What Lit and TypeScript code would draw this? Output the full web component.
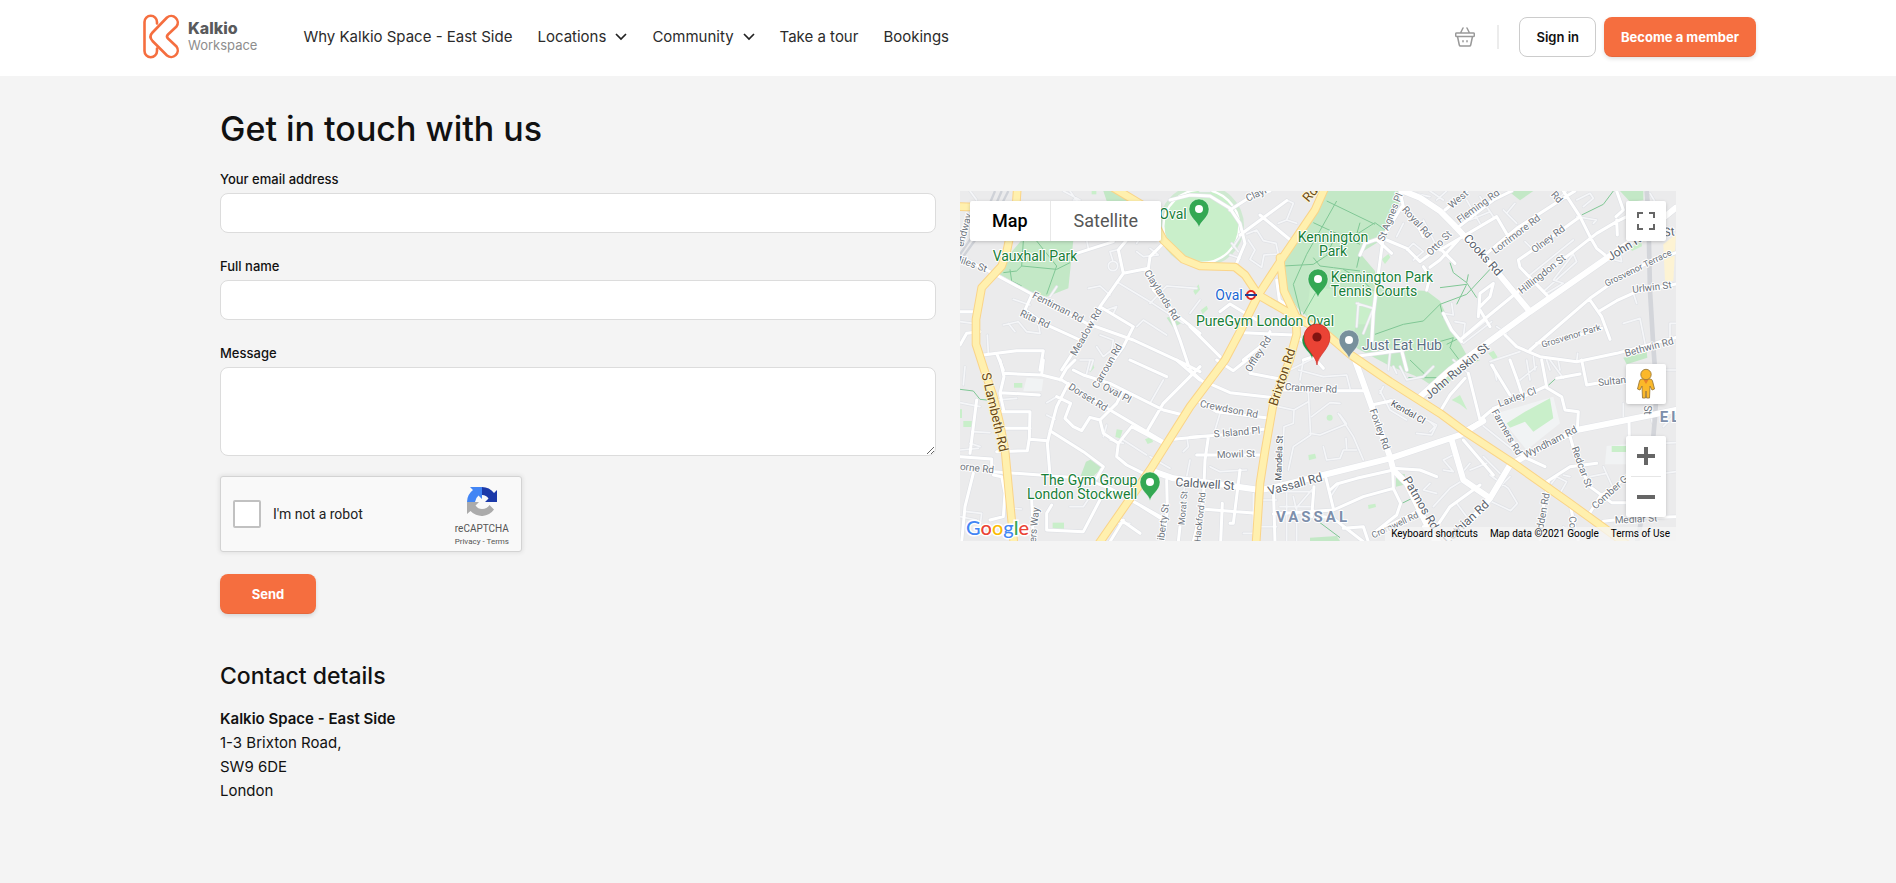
import { LitElement, html, svg, css } from "lit";
import { customElement } from "lit/decorators.js";

interface Sector {
  x: number;
  y: number;
  streets: string;
  lanes: string;
}

interface Label {
  t: string;
  x: number;
  y: number;
  r?: number;
  k?: string;
}

/* Base geometry is stored at three times the display scale. */
const PARKS = [
  "M105 242L185 147 340 147 325 292 260 317 210 302Z",
  "M1090 0L1330 0 1280 137 1200 187 1245 240 1250 290 1400 300 1440 330 1480 420 1530 510 1440 600 1380 560 1290 525 1150 450 1040 375 1012 350 975 300 970 217 1065 57Z",
  "M1340 507L1560 507 1470 550 1420 572 1370 560Z",
  "M1645 0L1720 0 1680 28Z", "M1980 0L2050 0 2050 28 2010 32Z",
  "M1990 500L2060 482 2062 500 2000 520Z",
  "M430 0L500 0 530 35 440 30Z", "M620 380L650 370 665 395 640 410Z",
  "M360 860L378 812 400 802 428 830 390 865Z",
  "M1308 845L1335 850 1330 882 1308 887Z", "M1050 1040L1130 1035 1140 1050 1050 1050Z",
];
const LAWNS = [
  "M1050 290L1240 300 1240 400 1190 400 1165 470 1040 410 1040 370Z",
  "M1640 697L1695 662 1770 622 1780 682 1720 722 1695 692 1650 710Z",
  "M1475 627L1500 612 1522 657 1500 640Z", "M1955 765h55v18h-55Z",
  "M162 576h25v14h-25Z", "M10 690h26v18h-26Z", "M0 655h6v26h-6Z", "M470 715l18 3-8 24-14-4Z",
  "M555 745l20-8 4 16-16 6Z", "M278 995h34v20h-34Z", "M385 530l14-12 4 12-12 14Z",
  "M700 300l16-20 4 16-14 16Z", "M722 358l18-14 4 10-16 16Z", "M1265 205l20-16 6 10-16 20Z",
  "M1045 792l20-4 4 14-22 6Z", "M1224 942l22-4 2 10-22 6Z", "M1100 680a9 9 0 1 0 18 0a9 9 0 1 0-18 0",
  "M2010 170l34-18 2 14-30 14Z", "M1585 487l16-8 12 20-12 8Z", "M395 0l14 0 0 10-14 0Z",
];
const PATHS =
  "M130 245L170 240 185 225 290 235 330 215M150 235L155 270 185 285M230 150L290 225M290 225L260 310M190 150L185 225" +
  "M585 180L605 160M1100 30L1245 100M1060 95L1200 160M1200 95L1190 130 1245 95 1280 120M1130 130L1100 190M1130 30L1040 190 1000 280 1030 400" +
  "M1060 200L1080 225 1120 230 1200 240M970 225L1060 220 1150 160M1150 235L1210 270 1240 300M1200 187L1190 230" +
  "M1030 370L1070 300M1245 430L1330 400 1390 390 1440 340 1520 310 1590 235M1470 215L1480 245 1520 275 1550 320M1520 275L1525 250M1440 290L1520 280 1490 340" +
  "M1440 340L1450 380M1410 460L1480 440 1470 470 1500 510M1460 460L1500 440M1865 72L1930 40 1960 0" +
  "M0 595L40 600 60 625 110 630M1345 560L1440 560M1350 507L1400 555M1380 612L1430 560M1755 592L1790 560M1080 995L1140 1040M1320 940L1360 920";

const SECTORS: Sector[] = [
  {
    x: -30, y: -33,
    streets:
      "M30 230L130 280 250 345 410 430 550 480 690 545 750 575M335 570L400 470 450 380 520 280 595 265 600 230 640 190" +
      "M520 280L505 210 530 180M595 265L610 330 680 405 750 460M660 400L690 480 720 570M380 220L490 185M450 380L550 440 520 500 470 570" +
      "M245 345L225 390 280 430 390 480M100 525L140 520 200 512 280 512 270 570M30 495L50 460 90 455M140 520L160 570M30 395L75 395",
    lanes:
      "M500 305L600 365 700 430M160 435L205 425 230 455 270 460 265 430M175 430L195 455M190 358L240 375M415 325L450 318 480 345M440 500L460 530 485 510 490 480 450 465" +
      "M360 33L385 70M600 370L650 318 740 325M560 215L580 230 625 225 600 205M115 520L112 465M560 440L580 420 650 465M320 320L300 350M340 33L390 60 370 60" +
      "M475 258a14 14 0 1 0 28 0a14 14 0 1 0-28 0M488 240L480 215 500 210M30 425L70 430M60 33L80 60M600 130L560 190M410 180L415 205M720 400L750 360M390 540L430 540 420 570M470 390L500 380 490 400",
  },
  {
    x: 690, y: -33,
    streets:
      "M-60 60L0 45 60 48 120 85 150 130 165 190 140 250M120 90L190 45 240 33M150 165L290 62M210 105L305 183M630 33L640 80 690 150 700 170" +
      "M635 80L580 170 565 280 550 400 545 490M510 225L525 190 560 178 605 220M590 180L650 205 690 245 750 200M700 260L720 290 710 330" +
      "M160 458L310 465 350 490M90 395L120 372 200 420M260 300L268 360 320 400M0 440L90 530M490 530L640 510M160 540L230 485 240 455M635 512L650 570M340 540L370 530 400 565",
    lanes:
      "M170 162L200 150 220 182 258 190 265 222 222 225 215 262 180 238 195 210 175 180M265 130L290 120 320 130M290 120L310 70 290 60M640 130L620 170M650 210L670 190 700 215M670 240L700 215" +
      "M500 370L550 385 520 460M505 370L500 440M130 200L150 170M125 190L145 215M120 225L150 235M60 33L30 33M600 520L595 570M700 120L740 200M720 50L640 33M380 530L300 570",
  },
  {
    x: 1410, y: -33,
    streets:
      "M45 90L80 60 110 33M80 145L190 60 245 33M30 210L200 110 235 170M170 220L260 145 400 55 435 33M400 33L450 110 480 170 500 205 525 225M450 110L395 150 265 240 270 262 355 350" +
      "M90 480L160 420 270 330 340 280 430 215 500 160 560 125 590 110M300 510L480 355 600 270 738 218M505 395L560 362 620 335 738 312M480 360L515 410 540 478M320 490L400 480 515 445" +
      "M225 465L260 500 330 530 440 545 560 520 738 472M0 262L30 240 85 180M30 205L75 250M40 400L65 450 95 485M145 410L150 340 190 310 180 350 150 380M150 390L180 440M560 33L580 90 558 110M560 120L562 165",
    lanes:
      "M310 530L315 570M350 540L360 570M440 545L443 520M385 545L390 570M580 430L630 415 645 490M340 335L440 245 430 222 370 300 400 310 350 340M110 60L150 130M150 50L190 110M100 490L185 425M100 475L170 420" +
      "M230 100L255 70M440 110L500 120 490 130M440 60L480 40 490 55 460 80M285 185L310 210M300 285L430 180M200 440L230 460M380 60L410 33M640 120L600 130M180 545L270 515M40 400L70 405 65 370M75 425L105 430 100 470" +
      "M0 33L40 60M20 60L50 33M610 340L620 370M720 470L720 430 738 430M555 240L575 245 570 220M120 120L180 95M220 90L260 130M660 40L690 90",
  },
  {
    x: -30, y: 507,
    streets:
      "M160 40L275 45 335 60 480 150 640 245M150 0L162 50 150 100 162 155M275 45L280 0M330 60L350 25 375 0M370 30L400 45 480 70 640 150 700 165M355 70L320 140 300 215 292 250 300 345" +
      "M150 98L268 105M150 155L240 155 238 235 232 272 140 275M150 205L240 205M240 238L292 242M300 212L400 275 460 320 440 355M130 335L270 345 400 355 480 385 560 430 640 480M455 410L400 515 290 510 290 460 305 435" +
      "M750 20L720 50 640 130 590 215M540 0L650 50M680 0L720 35 750 60M450 180L420 172 395 212 370 200 345 175 362 130 320 110M450 180L500 130 520 90M450 180L460 220 505 250 545 200M505 250L500 290 530 315 600 350M545 200L640 250" +
      "M670 238L750 230M520 480L480 545M510 478L570 520M650 360L652 450 640 545M560 430L640 475M690 500L685 545M30 290L125 297 125 330M130 345L155 350 165 400 160 470 120 480M80 120L60 280M70 340L45 440 35 545M250 545L245 415",
    lanes:
      "M410 40L420 0M65 215L120 218M30 128L90 140M50 455L95 460 90 500M30 470L80 480M190 445L215 447M520 240L590 285M290 128L320 110M290 165L315 178M470 195L460 230M140 120L200 115M480 240L520 250M600 290L660 325" +
      "M700 275L715 260 712 240M40 75L45 20M30 270L85 265M360 440L400 440 420 410M60 250L90 260M500 490L540 490M700 400L720 300M60 520L120 520M640 60L600 130",
  },
  {
    x: 690, y: 507,
    streets:
      "M0 30L50 75M45 65L120 98 240 112M80 0L130 32 170 0M180 40L285 60M280 90L400 92 525 92M20 120L80 155 240 175M0 232L90 225 220 208M50 285L210 285M55 232L45 300 40 420 10 545M20 285L50 285M92 545L97 430M45 448L200 460" +
      "M545 135L605 122M120 490L130 490M130 490L150 330M420 390L440 372 500 355 600 332M372 380L365 470M408 355L430 445M250 462L430 450 520 410 610 385 608 330M610 325L690 330 740 350M610 385L632 430 620 465 550 520M550 520L690 450" +
      "M400 470L430 475 520 545M460 505L520 500 535 545M700 500L750 545M250 380L255 545",
    lanes:
      "M90 160L75 210M60 320L90 335 170 330M330 70L355 100 362 225 310 260 295 330M330 60L340 0M325 30L400 50 470 45 480 85M265 140L312 150 310 190 282 200 272 380M355 125L312 150M365 170L420 128 450 130M360 220L390 225 470 192 450 165" +
      "M445 160L490 230 520 300M400 260L410 300 450 295 460 270 500 270M468 235L470 265M570 92L600 150 650 180M600 120L680 165 740 195 725 225 680 220M630 20L650 60 700 50 730 20M310 410L318 445 365 390M270 395L365 395M425 405L445 375M720 370L700 390 740 400" +
      "M270 440L360 440M290 400L290 545M320 445L320 545M190 400L190 545M160 520L200 520M210 420L260 420M210 500L260 500M580 80L570 100M610 20L620 40",
  },
  {
    x: 1410, y: 507,
    streets:
      "M115 40L150 180 185 150M190 145L270 115 345 80M345 80L395 110 405 150 445 155 442 208M185 15L240 105M240 0L262 60 275 100M335 0L350 80M380 55L450 42M455 0L470 75 500 70 600 60M190 145L200 175 280 290 345 320" +
      "M350 365L420 320 500 310M420 228L440 300 480 380 545 428 590 428M480 458L510 410 600 345M355 365L340 440 330 545M420 430L430 480 445 545M520 484L600 475 738 470M597 180L598 240M20 500L60 440 150 375M190 345L100 240" +
      "M30 155L60 105 105 55M105 210L150 185",
    lanes:
      "M180 345L235 385 262 430 242 452 185 425M100 360L60 385 10 440M120 310L95 340M40 330L70 335 40 300 80 280M160 290L210 340M520 320L545 375M150 190L250 270M660 160L668 190M690 250L738 248M700 340L738 335M0 215L15 200 0 185M200 60L190 15" +
      "M70 0L115 40M80 430L110 470M400 345L420 350M365 370L380 350 410 365 390 400M400 500L420 520 430 480M480 350L530 340M640 30L738 30M700 200L738 160M580 130L580 180M120 330L170 310M270 60L320 20M290 0L300 60M360 0L400 55M240 350L210 380",
  },
];

const ARTERIES =
  "M1330 0L1380 20 1440 60 1480 100 1590 217 1710 362M2148 50L2080 105 1940 202 1710 362 1580 457 1470 537 1380 617M570 837L640 862 780 880 900 897 930 892 1090 852 1290 802 1440 752 1500 732 1570 690" +
  "M2148 657L2000 687 1850 717 1710 787 1650 822 1590 922 1540 980 1440 1070M1475 747L1510 867 1590 922M1185 507L1240 660 1290 797 1300 837 1340 877 1380 960 1430 1060";
const TRUNKS =
  "M172 -10L168 50 140 182 125 225 65 290 48 385 48 460 72 535 100 617 120 700 135 777 150 937 162 1060M0 47L168 52M460 -10L560 50 610 147 670 205 720 225 825 228 855 252 895 312 990 367 1100 430 1170 490 1290 572 1440 667 1515 722 1660 817 1830 937 2000 1060" +
  "M1095 -10L1065 57 970 197 895 312 840 422 795 507 690 647 570 837 415 1060M960 200L972 300 1008 377 1010 430 988 510 940 637 915 780 900 877 888 1060";
const RAIL = "M2060 0L2065 60 2070 300 2080 467 2090 600 2085 680 2070 850 2030 1060";
const YARD = "M105 0L80 60 55 110 0 190M125 0L95 70 65 120 0 210M145 0L110 70";

const LABELS: Label[] = [
  { t: "Vauxhall Park", x: 75, y: 65, k: "poi" }, { t: "Oval", x: 213, y: 23, k: "poi" },
  { t: "Kennington", x: 373, y: 46, k: "poi" }, { t: "Park", x: 373, y: 60, k: "poi" },
  { t: "Kennington Park", x: 422, y: 86, k: "poi" }, { t: "Tennis Courts", x: 414, y: 100, k: "poi" },
  { t: "Oval", x: 269, y: 104, k: "poi tube" }, { t: "PureGym London Oval", x: 305, y: 130, k: "poi" },
  { t: "Just Eat Hub", x: 442, y: 154, k: "poi work" }, { t: "The Gym Group", x: 129, y: 289, k: "poi" },
  { t: "London Stockwell", x: 122, y: 303, k: "poi" },
  { t: "S Lambeth Rd", x: 35, y: 221, r: 77, k: "trunk" }, { t: "Brixton Rd", x: 322, y: 186, r: -72, k: "trunk" },
  { t: "Rd", x: 350, y: 3, r: -50, k: "trunk" },
  { t: "Cooks Rd", x: 523, y: 64, r: 48, k: "main" }, { t: "John Ruskin St", x: 497, y: 180, r: -40, k: "main" },
  { t: "John R", x: 664, y: 57, r: -32, k: "main" }, { t: "St", x: 709, y: 41, r: -5, k: "main" },
  { t: "Caldwell St", x: 245, y: 293, r: 4, k: "main" }, { t: "Vassall Rd", x: 335, y: 293, r: -15, k: "main" },
  { t: "Patmos Rd", x: 461, y: 312, r: 60, k: "main" }, { t: "Lothian Rd", x: 506, y: 331, r: -43, k: "main" },
  { t: "Wyndham Rd", x: 590, y: 251, r: -27 }, { t: "Bethwin Rd", x: 689, y: 156, r: -15 },
  { t: "Miles St", x: 10, y: 72, r: 20 }, { t: "endway", x: 4, y: 39, r: -75 },
  { t: "Fentiman Rd", x: 98, y: 116, r: 27 }, { t: "Rita Rd", x: 75, y: 128, r: 24 },
  { t: "Meadow Rd", x: 126, y: 141, r: -60 }, { t: "Claylands Rd", x: 202, y: 104, r: 58 },
  { t: "Carroun Rd", x: 147, y: 175, r: -60 }, { t: "Dorset Rd", x: 128, y: 206, r: 32 },
  { t: "Oval Pl", x: 157, y: 202, r: 28 }, { t: "orne Rd", x: 17, y: 277, r: 6 }, { t: "ers Way", x: 74, y: 334, r: -84 },
  { t: "Clayl", x: 296, y: 3, r: -25 }, { t: "Offley Rd", x: 298, y: 163, r: -58 },
  { t: "St Agnes Pl", x: 430, y: 26, r: -68 }, { t: "Royal Rd", x: 457, y: 31, r: 48 },
  { t: "Otto St", x: 479, y: 52, r: -45 }, { t: "West", x: 498, y: 8, r: -40 }, { t: "Fleming Rd", x: 518, y: 15, r: -36 },
  { t: "Rd", x: 597, y: 6, r: 48 }, { t: "Lorrimore Rd", x: 556, y: 43, r: -37 }, { t: "Olney Rd", x: 588, y: 48, r: -37 },
  { t: "Hillingdon St", x: 582, y: 83, r: -38 }, { t: "Grosvenor Terrace", x: 678, y: 77, r: -26, k: "small" },
  { t: "Urlwin St", x: 692, y: 96, r: -7 }, { t: "Grosvenor Park", x: 611, y: 145, r: -17, k: "small" },
  { t: "Morat St", x: 223, y: 317, r: -85, k: "small" }, { t: "iberty St", x: 203, y: 331, r: -82 },
  { t: "Hackford Rd", x: 240, y: 326, r: -84, k: "small" }, { t: "Cranmer Rd", x: 351, y: 197, r: 3 },
  { t: "Crewdson Rd", x: 269, y: 218, r: 11 }, { t: "S Island Pl", x: 277, y: 241, r: -5 },
  { t: "Mowil St", x: 276, y: 263, r: -2 }, { t: "Mandela St", x: 319, y: 267, r: -88, k: "small dark" },
  { t: "Foxley Rd", x: 420, y: 238, r: 70 }, { t: "Kendal Cl", x: 448, y: 221, r: 30, k: "small dark" },
  { t: "Cromwell Rd", x: 435, y: 334, r: -25, k: "small" }, { t: "Laxley Cl", x: 557, y: 206, r: -20 },
  { t: "Farmers Rd", x: 547, y: 241, r: 60 }, { t: "Redcar St", x: 622, y: 276, r: 70 },
  { t: "Comber Gr", x: 651, y: 300, r: -42 }, { t: "Medlar St", x: 676, y: 328, r: -3 },
  { t: "Sultan", x: 652, y: 190, r: -6 }, { t: "St", x: 687, y: 219, r: 90 },
  { t: "dden Rd", x: 583, y: 320, r: -80 }, { t: "Cou", x: 613, y: 334, r: 86 },
  { t: "VASSAL", x: 353, y: 326, k: "area" }, { t: "EL", x: 711, y: 226, k: "area" },
];

const PIN = "M0 0C-1-7-10-10-10-19A10 10 0 1 1 10-19C10-10 1-7 0 0Z";

@customElement("street-map")
export class StreetMap extends LitElement {
  static styles = css`
    :host { display: block; position: relative; height: 350px; overflow: hidden; background: #ebebec; font-family: Roboto, sans-serif; }
    svg.base { display: block; width: 100%; height: 100%; }
    .case, .fill { fill: none; stroke-linejoin: round; stroke-linecap: round; }
    .lane.case { stroke: #e0e2e6; stroke-width: 9; }
    .lane.fill { stroke: #f5f6f8; stroke-width: 5; }
    .street.case { stroke: #e0e2e6; stroke-width: 13; }
    .street.fill { stroke: #fff; stroke-width: 9; }
    .artery.case { stroke: #e0e2e6; stroke-width: 21; }
    .artery.fill { stroke: #fff; stroke-width: 18; }
    .trunk-road.case { stroke: #fad488; stroke-width: 26; }
    .trunk-road.fill { stroke: #fff0ae; stroke-width: 20; }
    .park { fill: #c3e8c6; }
    .lawn { fill: #c9efca; }
    .zone { fill: #f1f3f4; }
    .retail { fill: #fdf3d3; }
    .path { fill: none; stroke: #7fc795; stroke-width: 3; }
    .rail { fill: none; stroke: #d3d5da; stroke-width: 14; }
    .yard { fill: none; stroke: #cfd2d8; stroke-width: 7; }
    text { font-size: 10px; fill: #6f7680; stroke: #fff; stroke-width: 2px; paint-order: stroke; stroke-linejoin: round; text-anchor: middle; dominant-baseline: central; }
    .small { font-size: 9px; }
    .dark { fill: #4c535c; }
    .main { font-size: 12px; fill: #59616b; }
    .trunk { font-size: 13px; fill: #6a4a16; stroke: #fff6d2; }
    .poi { font-size: 14px; fill: #188038; }
    .tube { fill: #1a66d2; }
    .work { fill: #5b7083; }
    .area { font-size: 15px; font-weight: 700; fill: #7d8fab; letter-spacing: 3px; }
    .ctl { position: absolute; display: flex; background: #fff; box-shadow: 0 1px 4px -1px rgba(0, 0, 0, 0.3); border-radius: 2px; }
    button { margin: 0; padding: 0; border: 0; background: none; font: 18px/40px Roboto, sans-serif; color: #565656; height: 40px; cursor: pointer; }
    .types { left: 10px; top: 10px; }
    .types button { padding: 0 23px; }
    .types .on { padding: 0 22px; color: #000; font-weight: 500; border-right: 1px solid #e8e8e8; }
    .square button { width: 40px; display: grid; place-items: center; }
    .full { right: 10px; top: 10px; }
    .man { right: 10px; bottom: 137px; }
    .zoom { right: 10px; bottom: 24px; flex-direction: column; }
    .zoom hr { width: 30px; margin: 0 5px; border: 0; border-top: 1px solid #e6e6e6; }
    .logo { position: absolute; left: 6px; bottom: 2px; font: 500 20px/24px Lato, sans-serif; text-decoration: none; -webkit-text-stroke: 3px #fff; paint-order: stroke fill; }
    .b { color: #4285f4; } .r { color: #ea4335; } .y { color: #fbbc04; } .g { color: #34a853; }
    .legal { position: absolute; right: 0; bottom: 0; display: flex; gap: 12px; padding: 0 6px; background: rgba(245, 245, 245, 0.75); font-size: 10px; line-height: 14px; color: #000; }
    .legal a, .legal button { color: #000; font: inherit; height: 14px; text-decoration: none; }
  `;

  private layer(kind: "case" | "fill", type: "lanes" | "streets") {
    const name = type === "lanes" ? "lane" : "street";
    return SECTORS.map((s) => svg`<g transform="translate(${s.x} ${s.y})"><path class="${name} ${kind}" d=${s[type]}></path></g>`);
  }
  private pin(x: number, y: number, fill: string) {
    return svg`<g transform="translate(${x} ${y})"><path d=${PIN} fill=${fill} stroke="#fff" stroke-opacity=".5" stroke-width=".8"></path><circle cy="-19" r="4" fill="#fff"></circle></g>`;
  }

  render() {
    return html`
      <svg class="base" viewBox="0 0 716 350" preserveAspectRatio="xMidYMid slice" role="img" aria-label="Map around Brixton Road">
        <g transform="scale(0.33333)">
          <path class="zone" d="M1610 667L1780 617 1800 697 1700 777ZM1940 765L2000 760 2000 820 1935 820ZM200 560L250 565 245 600 190 600Z"></path>
          ${PARKS.map((d) => svg`<path class="park" d=${d}></path>`)}
          ${LAWNS.map((d) => svg`<path class="lawn" d=${d}></path>`)}
          <ellipse class="park" cx="724" cy="104" rx="128" ry="124" fill-opacity=".7"></ellipse>
          <ellipse cx="724" cy="106" rx="114" ry="110" class="lawn" stroke="#fff" stroke-width="7"></ellipse>
          <path class="retail" d="M2110 160L2148 130 2140 270 2115 270Z"></path>
          <path class="path" d=${PATHS}></path>
          <path class="yard" d=${YARD}></path>
          ${this.layer("case", "lanes")}${this.layer("case", "streets")}${this.layer("fill", "lanes")}
          <path class="artery case" d=${ARTERIES}></path>
          ${this.layer("fill", "streets")}
          <path class="rail" d=${RAIL}></path>
          <path class="artery fill" d=${ARTERIES}></path>
          <path class="trunk-road case" d=${TRUNKS}></path>
          <path class="trunk-road fill" d=${TRUNKS}></path>
        </g>
        ${LABELS.map((l) => svg`<text class=${l.k ?? ""} transform="translate(${l.x} ${l.y}) rotate(${l.r ?? 0})">${l.t}</text>`)}
        <circle cx="291" cy="104" r="4" fill="#fff" stroke="#dc241f" stroke-width="2"></circle>
        <path d="M285 104h12" stroke="#1c3f94" stroke-width="2"></path>
        ${this.pin(239, 37, "#34a853")}${this.pin(358, 107, "#34a853")}${this.pin(190, 310, "#34a853")}
        ${this.pin(352, 168, "#1e9447")}${this.pin(389, 168, "#78909c")}
        <path d="M357 174C356 164 344 158 344 146A13 13 0 1 1 370 146C370 158 358 164 357 174Z" fill="#ea4335" stroke="#c5221f" stroke-width=".6"></path>
        <circle cx="357" cy="146" r="4.600" fill="#811411"></circle>
      </svg>
      <div class="ctl types">
        <button class="on" type="button">Map</button><button type="button">Satellite</button>
      </div>
      <div class="ctl square full">
        <button type="button" aria-label="Toggle fullscreen">
          <svg width="18" height="18" viewBox="0 0 18 18"><path d="M0 0h6v2H2v4H0zM12 0h6v6h-2V2h-4zM0 12h2v4h4v2H0zM16 12h2v6h-6v-2h4z" fill="#666"></path></svg>
        </button>
      </div>
      <div class="ctl square man">
        <button type="button" aria-label="Street View">
          <svg width="18" height="32" viewBox="0 0 18 32">
            <path d="M5 11h8q2 0 2.500 2l2 8-2.500 1-2-4-.5 12h-3l-.5-7-.5 7h-3L5 18l-2 4-2.500-1 2-8Q3 11 5 11z" fill="#fbb829" stroke="#9c7b3a" stroke-width=".9"></path>
            <path d="M6 11h6l-3 5z" fill="#e8822b"></path>
            <circle cx="9" cy="6.500" r="5.200" fill="#fbb829" stroke="#9c7b3a" stroke-width=".9"></circle>
          </svg>
        </button>
      </div>
      <div class="ctl square zoom">
        <button type="button" aria-label="Zoom in"><svg width="18" height="18"><path d="M7 0h4v7h7v4h-7v7H7v-7H0V7h7z" fill="#666"></path></svg></button>
        <hr />
        <button type="button" aria-label="Zoom out"><svg width="18" height="18"><path d="M0 7h18v4H0z" fill="#666"></path></svg></button>
      </div>
      <a class="logo" href="#"><span class="b">G</span><span class="r">o</span><span class="y">o</span><span class="b">g</span><span class="g">l</span><span class="r">e</span></a>
      <div class="legal"><button type="button">Keyboard shortcuts</button><span>Map data ©2021 Google</span><a href="#">Terms of Use</a></div>
    `;
  }
}

@customElement("app-root")
export class AppRoot extends LitElement {
  static styles = css`
    :host { display: block; min-height: 100vh; background: #f4f4f4; color: #111; font: 15px/24px Inter, sans-serif; }
    * { box-sizing: border-box; }
    a { color: inherit; text-decoration: none; }
    header { background: #fff; }
    .bar { max-width: 1616px; height: 76px; margin: 0 auto; padding: 0 0 3px 3px; display: flex; align-items: center; }
    .brand { display: flex; align-items: center; gap: 8px; margin-right: 46px; }
    .brand span { display: block; font-size: 13px; line-height: 17px; color: #8d8d8d; }
    .brand b { display: block; font-size: 16px; line-height: 17px; font-weight: 800; color: #595a5c; }
    nav { display: flex; gap: 25px; color: #2b2b2b; }
    nav a { display: flex; align-items: center; gap: 9px; }
    .tools { margin-left: auto; display: flex; align-items: center; }
    .cart { display: flex; padding-right: 22px; margin-right: 20px; height: 24px; align-items: center; border-right: 2px solid #ececec; }
    .btn { display: inline-flex; align-items: center; justify-content: center; height: 40px; border-radius: 8px; font: 600 13px/20px Inter, sans-serif; color: #111; background: #fff; border: 1px solid #ccc; padding: 0 16px; cursor: pointer; }
    .btn.hot { color: #fff; font-weight: 700; background: #f56e3f; border: 0; box-shadow: 0 2px 4px rgba(0, 0, 0, 0.12), inset 0 -1px 0 rgba(0, 0, 0, 0.06); }
    .tools .hot { margin-left: 8px; padding: 0 17px; }
    main { max-width: 1456px; margin: 0 auto; padding: 31px 0 72px; display: grid; grid-template-columns: 1fr 1fr; column-gap: 24px; }
    h1 { grid-column: 1 / -1; margin: 0 0 18px; font-size: 34px; line-height: 44px; font-weight: 500; }
    street-map { margin-top: 22px; align-self: start; }
    form { display: flex; flex-direction: column; }
    label.name { font-size: 13px; line-height: 20px; font-weight: 500; margin-bottom: 4px; }
    .field { width: 100%; height: 40px; margin: 0 0 23px; padding: 0 12px; border: 1px solid #dcdcdc; border-radius: 8px; background: #fff; font: inherit; }
    textarea.field { height: 89px; padding: 8px 12px; margin-bottom: 20px; resize: vertical; display: block; }
    .captcha { width: 302px; height: 76px; padding-left: 12px; display: flex; align-items: center; border: 1px solid #d3d3d3; border-radius: 3px; background: #f9f9f9; box-shadow: 0 0 4px 1px rgba(0, 0, 0, 0.08); font-family: Roboto, sans-serif; color: #222; }
    .captcha label { display: flex; align-items: center; gap: 12px; font-size: 14px; line-height: 20px; }
    .captcha input { appearance: none; width: 28px; height: 28px; margin: 0; border: 2px solid #c1c1c1; border-radius: 2px; background: #fff; }
    .mark { margin: 0 12px 0 auto; padding-top: 6px; display: flex; flex-direction: column; align-items: center; font-size: 10px; line-height: 13px; color: #555; }
    .mark svg { margin-bottom: 5px; }
    .mark small { font-size: 8px; }
    .send { align-self: flex-start; margin-top: 22px; width: 96px; }
    .details { grid-column: 1; }
    h2 { margin: 46px 0 15px; font-size: 23px; line-height: 32px; font-weight: 500; }
    address { font-style: normal; }
    address b { font-weight: 600; display: block; }
  `;

  private chevron = () => svg`<svg width="12" height="8" viewBox="0 0 12 8" fill="none" stroke="#222" stroke-width="1.700"><path d="M1 1l5 5 5-5"></path></svg>`;

  render() {
    return html`
      <header>
        <div class="bar">
          <a class="brand" href="#">
            <svg width="37" height="45" viewBox="0 0 37 45" fill="none" stroke="#f56e3f" stroke-width="2.600" stroke-linecap="round" stroke-linejoin="round">
              <path d="M14 9.500V8A6.200 6.200 0 0 0 1.500 8V37A6.200 6.200 0 0 0 14 37V34.500"></path>
              <path d="M9.500 18.500 24 3.500A6.600 6.600 0 0 1 33.500 12.500L25 20.500Q23 22.500 25 24.500L33.500 32.500A6.600 6.600 0 0 1 24 41.500L9.500 27Q5.500 22.500 9.500 18.500Z"></path>
            </svg>
            <div><b>Kalkio</b><span>Workspace</span></div>
          </a>
          <nav>
            <a href="#">Why Kalkio Space - East Side</a>
            <a href="#">Locations ${this.chevron()}</a>
            <a href="#">Community ${this.chevron()}</a>
            <a href="#">Take a tour</a>
            <a href="#">Bookings</a>
          </nav>
          <div class="tools">
            <a class="cart" href="#" aria-label="Basket">
              <svg width="20" height="20" viewBox="0 0 20 20" fill="none" stroke="#999" stroke-width="1.500" stroke-linejoin="round" stroke-linecap="round">
                <path d="M1.500 6h17q.8 0 .8 1v1.500q0 1-.8 1h-17q-.8 0-.8-1V7q0-1 .8-1zM2.500 9.500l1.800 8.500q.2 1 1.200 1h9q1 0 1.200-1l1.800-8.500M5.500 6 8 1M14.500 6 12 1"></path>
                <path d="M8 13.800v1M12 13.800v1"></path>
              </svg>
            </a>
            <button class="btn" type="button">Sign in</button>
            <button class="btn hot" type="button">Become a member</button>
          </div>
        </div>
      </header>
      <main>
        <h1>Get in touch with us</h1>
        <form>
          <label class="name" for="email">Your email address</label>
          <input class="field" id="email" type="email" />
          <label class="name" for="name">Full name</label>
          <input class="field" id="name" type="text" />
          <label class="name" for="message">Message</label>
          <textarea class="field" id="message"></textarea>
          <div class="captcha">
            <label><input type="checkbox" />I'm not a robot</label>
            <div class="mark">
              <svg width="30" height="30" viewBox="0 0 30 30">
                <path d="M15 0A15 15 0 0 1 27 6L30 3V15H18L21.500 11.500A7.500 7.500 0 0 0 15 8Z" fill="#1c3aa9"></path>
                <path d="M15 0V12L11.500 8.500Q8.500 11 8 15H0A15 15 0 0 1 6 3L3 0Z" fill="#4285f4"></path>
                <path d="M0 15H12L8.500 18.500Q11 22 15 22 20 22 22.500 18L27 22.500A15 15 0 0 1 3.500 24L0 27Z" fill="#ababab"></path>
              </svg>
              <span>reCAPTCHA</span>
              <small><a href="#">Privacy</a> - <a href="#">Terms</a></small>
            </div>
          </div>
          <button class="btn hot send" type="button">Send</button>
        </form>
        <street-map></street-map>
        <section class="details">
          <h2>Contact details</h2>
          <address><b>Kalkio Space - East Side</b>1-3 Brixton Road,<br />SW9 6DE<br />London</address>
        </section>
      </main>
    `;
  }
}
